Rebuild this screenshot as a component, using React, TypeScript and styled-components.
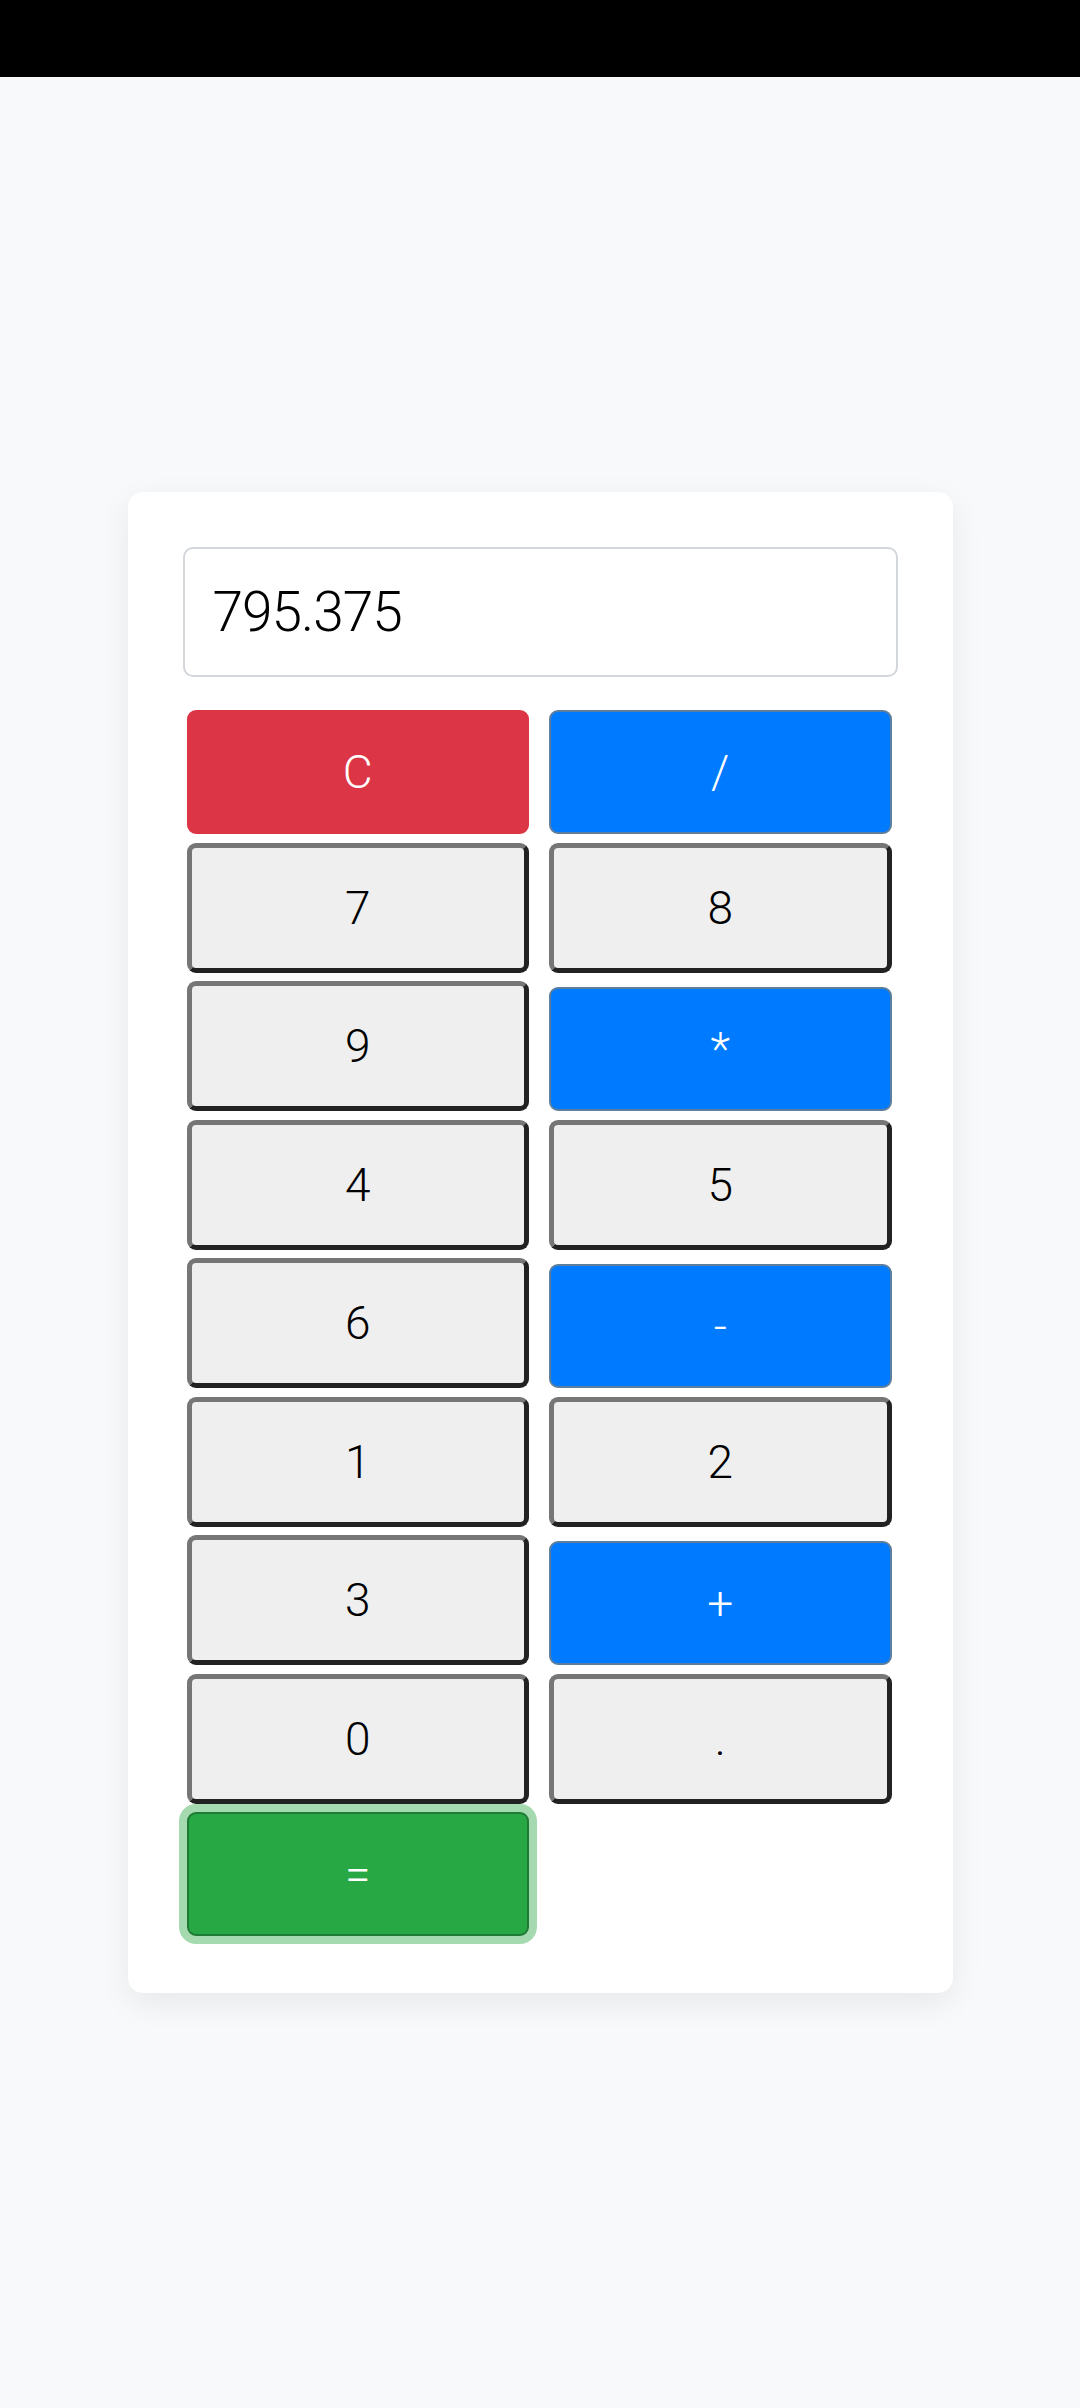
import styled, { createGlobalStyle, css } from 'styled-components';

type Variant = 'num' | 'danger' | 'primary' | 'success';

const GlobalStyle = createGlobalStyle`
  * { box-sizing: border-box; }
  body {
    margin: 0;
    background: #f8f9fa;
    font-family: Roboto, "Noto Sans", Arial, sans-serif;
  }
`;

const StatusBar = styled.div`
  height: 77px;
  background: #000;
`;

const Main = styled.main`
  min-height: 2331px;
  display: flex;
  align-items: center;
  justify-content: center;
`;

const Card = styled.div`
  width: 825px;
  padding: 55px 55px 57px;
  background: #fff;
  border-radius: 15px;
  box-shadow: 0 10px 32px rgba(0, 0, 0, 0.07);
`;

const Display = styled.input`
  display: block;
  width: 100%;
  height: 130px;
  margin: 0;
  padding: 0 0 0 28px;
  border: 2px solid #d3d7db;
  border-radius: 10px;
  background: #fff;
  color: #000;
  font-family: Roboto, "Noto Sans", Arial, sans-serif;
  font-size: 55px;
  font-weight: 300;
  letter-spacing: -1px;
  outline: none;
`;

const Keypad = styled.div`
  display: grid;
  grid-template-columns: 1fr 1fr;
  column-gap: 20px;
  row-gap: 8.5px;
  margin-top: 33px;
  padding: 0 6px 0 4px;
`;

const variants = {
  num: css`
    height: 130px;
    background: #efefef;
    color: #000;
    border: 5px solid;
    border-color: #767676 #222 #222 #767676;
  `,
  danger: css`
    height: 124px;
    background: #dc3545;
    color: #fff;
    border: 2px solid #dc3545;
  `,
  primary: css`
    height: 124px;
    background: #007bff;
    color: #fff;
    border: 2px solid #5e7e9e;
  `,
  success: css`
    height: 124px;
    background: #28a745;
    color: #fff;
    border: 2px solid #1e7a34;
    box-shadow: 0 0 0 8px rgba(40, 167, 69, 0.42);
  `,
};

const Key = styled.button<{ $variant: Variant }>`
  align-self: end;
  margin: 0;
  padding: 0;
  border-radius: 9px;
  font-family: Roboto, "Noto Sans", Arial, sans-serif;
  font-size: 46px;
  font-weight: 300;
  line-height: 1;
  cursor: pointer;
  ${({ $variant }) => variants[$variant]}
`;

const keys: { label: string; variant: Variant }[] = [
  { label: 'C', variant: 'danger' },
  { label: '/', variant: 'primary' },
  { label: '7', variant: 'num' },
  { label: '8', variant: 'num' },
  { label: '9', variant: 'num' },
  { label: '*', variant: 'primary' },
  { label: '4', variant: 'num' },
  { label: '5', variant: 'num' },
  { label: '6', variant: 'num' },
  { label: '-', variant: 'primary' },
  { label: '1', variant: 'num' },
  { label: '2', variant: 'num' },
  { label: '3', variant: 'num' },
  { label: '+', variant: 'primary' },
  { label: '0', variant: 'num' },
  { label: '.', variant: 'num' },
  { label: '=', variant: 'success' },
];

export default function App() {
  return (
    <>
      <GlobalStyle />
      <StatusBar />
      <Main>
        <Card>
          <Display type="text" readOnly value="795.375" />
          <Keypad>
            {keys.map((k) => (
              <Key key={k.label} $variant={k.variant}>
                {k.label}
              </Key>
            ))}
          </Keypad>
        </Card>
      </Main>
    </>
  );
}
